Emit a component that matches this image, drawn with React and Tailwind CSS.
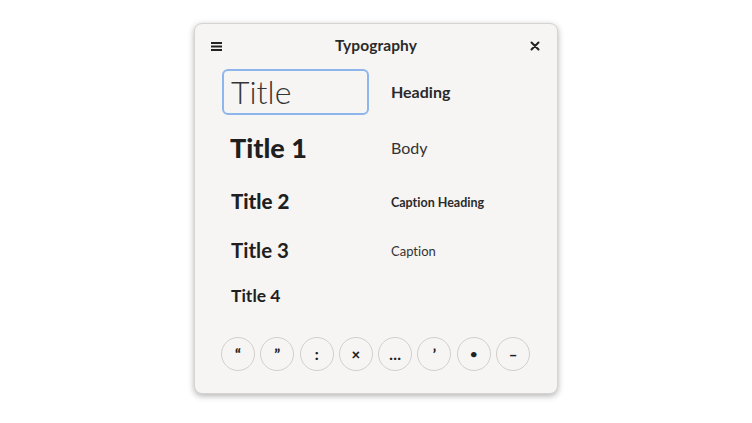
import React from 'react'

const FONT = { fontFamily: 'Lato, "Noto Sans", sans-serif' }

const CHARS = ['“', '”', ':', '×', '…', '’', '•', '–']

function Row({ h, left, right }) {
  return (
    <div className={`flex items-center ${h}`}>
      <div className="w-[147px] pl-[9px]">{left}</div>
      <div className="ml-[22px]">{right}</div>
    </div>
  )
}

export default function App() {
  return (
    <div className="w-[752px] h-[423px] bg-white flex justify-center pt-[23px] [font-variant-ligatures:none]" style={FONT}>
      <div className="w-[364px] h-[371px] bg-[#f6f5f4] rounded-[8px] border border-[#d6d3d0] shadow-[0_2px_6px_rgba(0,0,0,0.3)] flex flex-col text-[#2e3436]">
        {/* header */}
        <div className="h-[44px] flex items-center justify-between px-[16px] shrink-0">
          <svg width="11" height="11" viewBox="0 0 11 11">
            <rect x="0" y="1" width="11" height="2" fill="#222" />
            <rect x="0" y="4.5" width="11" height="2" fill="#222" />
            <rect x="0" y="8" width="11" height="2" fill="#222" />
          </svg>
          <span className="text-[15.5px] font-bold text-[#2a2a2a] tracking-[0.1px] -mt-[1px]">Typography</span>
          <svg width="10" height="10" viewBox="0 0 10 10" className="mr-[1px]">
            <path d="M1.5 1.5 L8.5 8.5 M8.5 1.5 L1.5 8.5" stroke="#222" strokeWidth="2" strokeLinecap="round" />
          </svg>
        </div>

        <div className="flex flex-col pl-[27px] pt-[1px]">
          <div className="flex items-center h-[46px]">
            <div className="w-[147px] h-[46px] rounded-[6px] border-2 border-[#8cb6ec] bg-[#f6f5f4] flex items-center pl-[7px]">
              <span className="text-[32px] font-light text-[#353535] leading-none">Title</span>
            </div>
            <span className="ml-[22px] text-[16px] font-bold text-[#2a2a2a] -mt-[1px]">Heading</span>
          </div>
          <Row
            h="h-[66px]"
            left={<span className="text-[27px] font-black text-[#1f1f1f] -ml-[1px]">Title 1</span>}
            right={<span className="text-[16px] text-[#333]">Body</span>}
          />
          <Row
            h="h-[40px]"
            left={<span className="text-[20.5px] font-black text-[#1f1f1f]">Title 2</span>}
            right={<span className="text-[12.5px] font-bold text-[#2a2a2a]">Caption Heading</span>}
          />
          <Row
            h="h-[58px]"
            left={<span className="text-[20.5px] font-bold text-[#1f1f1f]">Title 3</span>}
            right={<span className="text-[13px] text-[#333]">Caption</span>}
          />
          <Row
            h="h-[34px]"
            left={<span className="text-[17.5px] font-bold text-[#1f1f1f]">Title 4</span>}
            right={null}
          />
        </div>

        <div className="flex gap-[5.3px] pl-[26px] mt-[24px]">
          {CHARS.map((c, i) => (
            <div
              key={i}
              className={`w-[34px] h-[34px] rounded-full border border-[#d3cfcb] bg-[#f6f5f4] flex items-center justify-center font-black text-[#222] ${c === '•' ? 'text-[12px]' : 'text-[15px]'}`}
            >
              {c}
            </div>
          ))}
        </div>
      </div>
    </div>
  )
}
